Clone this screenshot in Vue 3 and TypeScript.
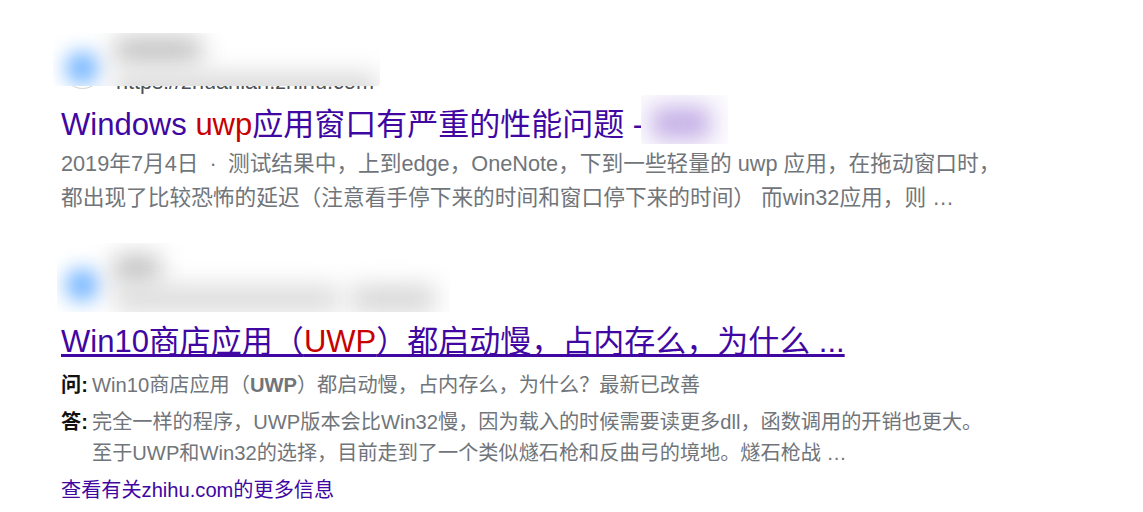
<script setup lang="ts">
interface Part {
  text: string
  hit?: boolean
}

const firstTitle: Part[] = [
  { text: 'Windows ' },
  { text: 'uwp', hit: true },
  { text: '应用窗口有严重的性能问题 -' },
]
const date = '2019年7月4日'
const firstSnippet: string[] = [
  '测试结果中，上到edge，OneNote，下到一些轻量的 uwp 应用，在拖动窗口时，',
  '都出现了比较恐怖的延迟（注意看手停下来的时间和窗口停下来的时间） 而win32应用，则 …',
]
const secondTitle: Part[] = [
  { text: 'Win10商店应用（' },
  { text: 'UWP', hit: true },
  { text: '）都启动慢，占内存么，为什么 ...' },
]
const question: Part[] = [
  { text: 'Win10商店应用（' },
  { text: 'UWP', hit: true },
  { text: '）都启动慢，占内存么，为什么？最新已改善' },
]
const answer: string[] = [
  '完全一样的程序，UWP版本会比Win32慢，因为载入的时候需要读更多dll，函数调用的开销也更大。',
  '至于UWP和Win32的选择，目前走到了一个类似燧石枪和反曲弓的境地。燧石枪战 …',
]
</script>

<template>
  <main class="results">
    <article class="result">
      <header class="source source-first">
        <span class="ring"></span>
        <span class="url">https://zhuanlan.zhihu.com</span>
        <div class="veil veil-first">
          <i class="smudge icon"></i>
          <i class="smudge name"></i>
          <i class="smudge address"></i>
        </div>
      </header>
      <h2 class="title">
        <a class="title-link"><span v-for="(p, i) in firstTitle" :key="i" :class="{ hit: p.hit }">{{ p.text }}</span></a>
        <span class="veil-title"><i class="smudge author"></i></span>
      </h2>
      <div class="snippet">
        <p v-for="(line, i) in firstSnippet" :key="i"><template v-if="i === 0">{{ date }}<span class="dot">·</span></template>{{ line }}</p>
      </div>
    </article>

    <article class="result second">
      <header class="source source-second">
        <div class="veil veil-second">
          <i class="smudge icon"></i>
          <i class="smudge name"></i>
          <i class="smudge address"></i>
          <i class="smudge crumb"></i>
        </div>
      </header>
      <h2 class="title">
        <a class="title-link underlined"><span v-for="(p, i) in secondTitle" :key="i" :class="{ hit: p.hit }">{{ p.text }}</span></a>
      </h2>
      <dl class="qa">
        <dt>问:</dt>
        <dd><span v-for="(p, i) in question" :key="i" :class="{ strong: p.hit }">{{ p.text }}</span></dd>
        <dt>答:</dt>
        <dd>
          <p v-for="line in answer" :key="line">{{ line }}</p>
        </dd>
      </dl>
      <a class="more">查看有关zhihu.com的更多信息</a>
    </article>
  </main>
</template>

<style>
body {
  margin: 0;
  background: #fff;
}
</style>

<style scoped>
.results {
  box-sizing: border-box;
  width: 1143px;
  height: 512px;
  padding: 33px 0 0 61px;
  overflow: hidden;
  background: #fff;
  color: #70757a;
  font-family: "Liberation Sans", "Noto Sans CJK SC", sans-serif;
  white-space: nowrap;
}
p,
h2,
dl,
dd {
  margin: 0;
}
.source {
  position: relative;
}
.source-first {
  height: 72px;
}
.source-second {
  height: 79px;
}
.ring {
  position: absolute;
  left: 1px;
  top: 15px;
  box-sizing: border-box;
  width: 41px;
  height: 41px;
  border: 1px solid #d2d2d6;
  border-radius: 50%;
}
.url {
  position: absolute;
  left: 55px;
  top: 36px;
  color: #4d5156;
  font-size: 21.7px;
  line-height: 25px;
}
.veil {
  position: absolute;
  overflow: hidden;
  background: #fff;
  border-radius: 3px;
}
.veil-first {
  left: -8px;
  top: 0;
  width: 327px;
  height: 53px;
}
.veil-second {
  left: -4px;
  top: 0;
  width: 393px;
  height: 69px;
}
.smudge {
  position: absolute;
  display: block;
}
.icon {
  width: 32px;
  height: 32px;
  border-radius: 14px;
  background: #72b4ff;
  filter: blur(10px);
}
.name {
  background: #c0c0c0;
  filter: blur(12px);
}
.address {
  background: #dadada;
  filter: blur(12px);
}
.veil-first .icon {
  left: 13px;
  top: 19px;
}
.veil-first .name {
  left: 62px;
  top: 4px;
  width: 86px;
  height: 26px;
}
.veil-first .address {
  left: 62px;
  top: 40px;
  width: 262px;
  height: 34px;
}
.veil-second .icon {
  left: 9px;
  top: 26px;
}
.veil-second .name {
  left: 57px;
  top: 12px;
  width: 46px;
  height: 28px;
}
.veil-second .address {
  left: 58px;
  top: 43px;
  width: 224px;
  height: 26px;
}
.crumb {
  left: 294px;
  top: 43px;
  width: 84px;
  height: 26px;
  background: #d4d4d4;
  filter: blur(12px);
}
.title {
  display: flex;
  align-items: center;
  height: 40px;
  font-size: 31px;
  font-weight: 400;
  line-height: 40px;
}
.title-link {
  color: #4007a2;
}
.hit {
  color: #c80000;
}
.underlined {
  text-decoration: underline;
  text-decoration-thickness: 3px;
  text-underline-offset: 2px;
  text-decoration-skip-ink: none;
}
.veil-title {
  position: relative;
  width: 87px;
  height: 49px;
  margin: -11px 0 0 -2px;
  overflow: hidden;
  border-radius: 3px;
  background: #fcfbfe;
}
.author {
  left: 11px;
  top: 12px;
  width: 58px;
  height: 32px;
  background: #c4afe6;
  filter: blur(11px);
}
.snippet {
  padding-top: 2px;
  font-size: 21.7px;
  line-height: 34px;
}
.snippet p {
  height: 34px;
}
.dot {
  display: inline-block;
  width: 29.5px;
  text-align: center;
}
.second {
  padding-top: 28px;
}
.qa {
  display: grid;
  grid-template-columns: 31px 1fr;
  row-gap: 6px;
  padding-top: 8px;
  font-size: 20.16px;
  line-height: 31px;
}
.qa dt {
  height: 31px;
  color: #111;
  font-weight: 700;
}
.qa dd p {
  height: 31px;
}
.strong {
  font-weight: 700;
}
.more {
  display: block;
  height: 31px;
  margin-top: 6px;
  color: #4007a2;
  font-size: 20.15px;
  line-height: 31px;
}
</style>
